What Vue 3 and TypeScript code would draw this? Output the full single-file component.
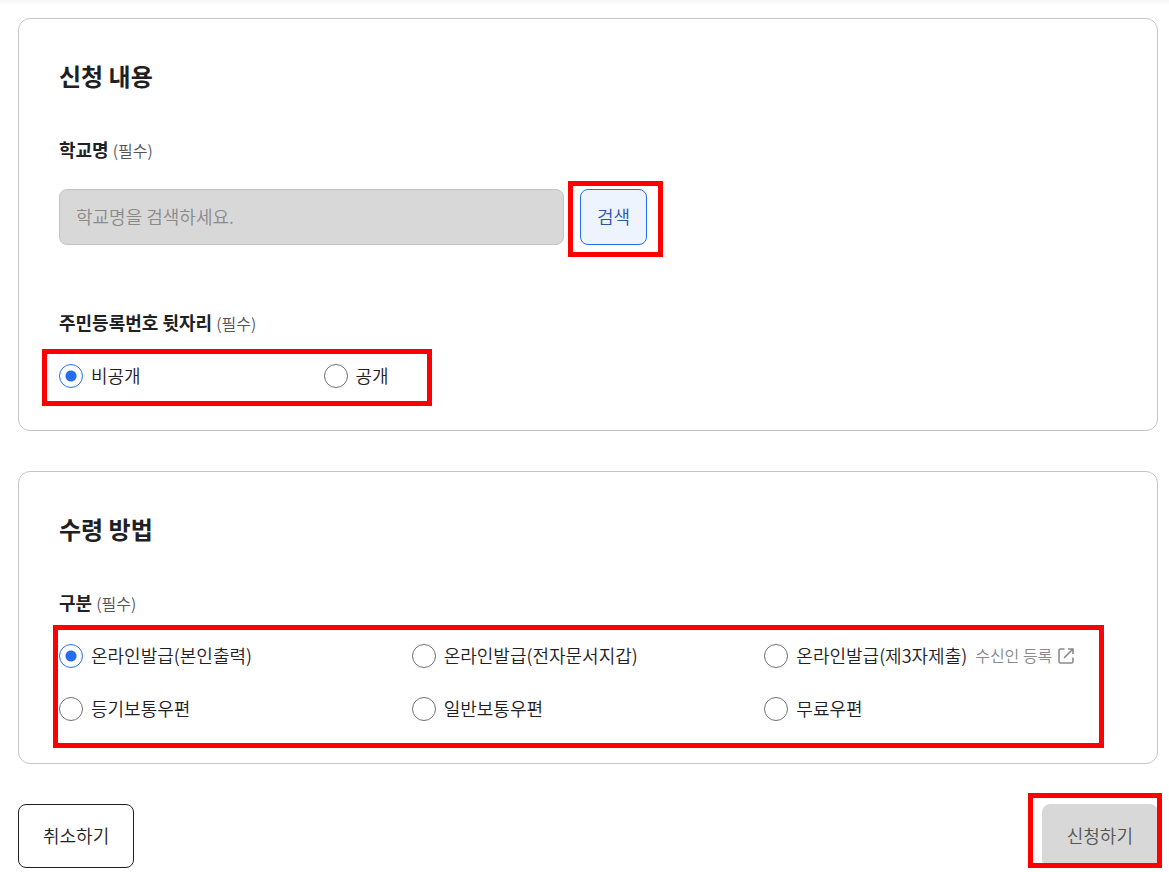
<script setup lang="ts">
import { ref } from 'vue'

interface Option {
  value: string
  label: string
  link?: string
}

const disclosureOptions: Option[] = [
  { value: 'private', label: '비공개' },
  { value: 'public', label: '공개' },
]

const deliveryOptions: Option[] = [
  { value: 'self', label: '온라인발급(본인출력)' },
  { value: 'wallet', label: '온라인발급(전자문서지갑)' },
  { value: 'third', label: '온라인발급(제3자제출)', link: '수신인 등록' },
  { value: 'registered', label: '등기보통우편' },
  { value: 'regular', label: '일반보통우편' },
  { value: 'free', label: '무료우편' },
]

const school = ref('')
const disclosure = ref('private')
const delivery = ref('self')
</script>

<template>
  <form class="page" @submit.prevent>
    <section class="card">
      <h2 class="title">신청 내용</h2>
      <div class="field">
        <label class="label" for="school">학교명 <span class="required">(필수)</span></label>
        <div class="search">
          <input id="school" v-model="school" class="search-input" type="text" placeholder="학교명을 검색하세요." disabled />
          <div class="marked marked-search">
            <button class="search-button" type="button">검색</button>
          </div>
        </div>
      </div>
      <fieldset class="field">
        <legend class="label">주민등록번호 뒷자리 <span class="required">(필수)</span></legend>
        <div class="options options-four marked marked-disclosure">
          <div v-for="o in disclosureOptions" :key="o.value" class="option">
            <input :id="o.value" v-model="disclosure" class="radio" type="radio" name="disclosure" :value="o.value" />
            <label class="option-label" :for="o.value">{{ o.label }}</label>
          </div>
        </div>
      </fieldset>
    </section>

    <section class="card">
      <h2 class="title">수령 방법</h2>
      <fieldset class="field">
        <legend class="label">구분 <span class="required">(필수)</span></legend>
        <div class="options options-three marked marked-delivery">
          <div v-for="o in deliveryOptions" :key="o.value" class="option">
            <input :id="o.value" v-model="delivery" class="radio" type="radio" name="delivery" :value="o.value" />
            <label class="option-label" :for="o.value">{{ o.label }}</label>
            <a v-if="o.link" class="register" href="#">
              <span class="option-label">{{ o.link }}</span>
              <svg class="open-icon" viewBox="0 0 16 16" aria-hidden="true">
                <path d="M6.5 1H2.6Q1 1 1 2.6V13.4Q1 15 2.6 15H13.4Q15 15 15 13.4V9.5M10 1H15V6M15 1L6 10" />
              </svg>
            </a>
          </div>
        </div>
      </fieldset>
    </section>

    <div class="actions">
      <button class="action cancel" type="button">취소하기</button>
      <div class="marked marked-submit">
        <button class="action submit" type="submit" disabled>신청하기</button>
      </div>
    </div>
  </form>
</template>

<style>
body {
  background: #fff;
}
</style>

<style scoped>
.page {
  box-sizing: border-box;
  padding: 18px 11px 4px 18px;
  background: linear-gradient(#f5f5f5, #fff 5px);
  color: #1e2124;
  font-family: "Noto Sans CJK KR", sans-serif;
  font-size: 18px;
  font-weight: 350;
  line-height: 28px;
}

.card {
  margin-bottom: 40px;
  padding: 40px;
  border: 1px solid #c6c6c6;
  border-radius: 12px;
  background: #fff;
}

.title {
  margin: 0 0 41px;
  font-size: 24px;
  font-weight: 700;
  line-height: 34px;
}

.field {
  min-width: 0;
  margin: 0;
  padding: 0;
  border: 0;
}

.field + .field {
  margin-top: 62px;
}

.label {
  display: block;
  margin-bottom: 24px;
  padding: 0;
  font-weight: 700;
  line-height: 30px;
}

.required {
  color: #555;
  font-size: 16px;
  font-weight: 350;
}

.search {
  display: flex;
  gap: 16px;
  max-width: 588px;
}

.search-input {
  flex: 1;
  box-sizing: border-box;
  min-width: 0;
  height: 56px;
  padding: 0 16px 2px;
  border: 1px solid #c4c4c4;
  border-radius: 8px;
  background: #d8d8d8;
  font: inherit;
}

.search-input::placeholder {
  color: #8a8a8a;
  opacity: 1;
}

.search-button {
  display: block;
  height: 56px;
  padding: 0 16px 2px;
  border: 1px solid #256ef4;
  border-radius: 8px;
  background: #eef4fe;
  color: #2b56b0;
  font: inherit;
}

.options {
  display: grid;
  row-gap: 25px;
}

.options-four {
  grid-template-columns: repeat(4, 1fr);
}

.options-three {
  grid-template-columns: repeat(3, 1fr);
}

.option {
  display: flex;
  align-items: center;
  gap: 8px;
  height: 28px;
  white-space: nowrap;
}

.option-label {
  padding-bottom: 3px;
}

.radio {
  flex: none;
  box-sizing: border-box;
  width: 24px;
  height: 24px;
  margin: 0;
  border: 1px solid #717171;
  border-radius: 50%;
  background: #fff;
  appearance: none;
}

.radio:checked {
  border-color: #256ef4;
  background: radial-gradient(circle, #256ef4 5px, #fff 6px);
}

.register {
  display: flex;
  align-items: center;
  gap: 6px;
  color: #8a8a8a;
  font-size: 16px;
  text-decoration: none;
}

.open-icon {
  width: 16px;
  height: 16px;
  fill: none;
  stroke: #8a8a8a;
  stroke-width: 1.6;
}

.actions {
  display: flex;
  justify-content: space-between;
}

.action {
  display: block;
  height: 64px;
  padding: 0 24px 2px;
  border: 1px solid #1e2124;
  border-radius: 8px;
  background: #fff;
  color: #1e2124;
  font: inherit;
}

.submit {
  border-color: #d8d8d8;
  background: #d8d8d8;
  color: #555;
}

.marked {
  position: relative;
}

.marked::after {
  content: "";
  position: absolute;
  border: 5px solid #f00;
  pointer-events: none;
}

.marked-search::after {
  inset: -8px -16px -12px -12px;
}

.marked-disclosure::after {
  inset: -13px auto -16px -17px;
  width: 380px;
}

.marked-delivery::after {
  inset: -17px 13px -25px -6px;
}

.marked-submit::after {
  inset: -11px -4px 0 -14px;
}
</style>
